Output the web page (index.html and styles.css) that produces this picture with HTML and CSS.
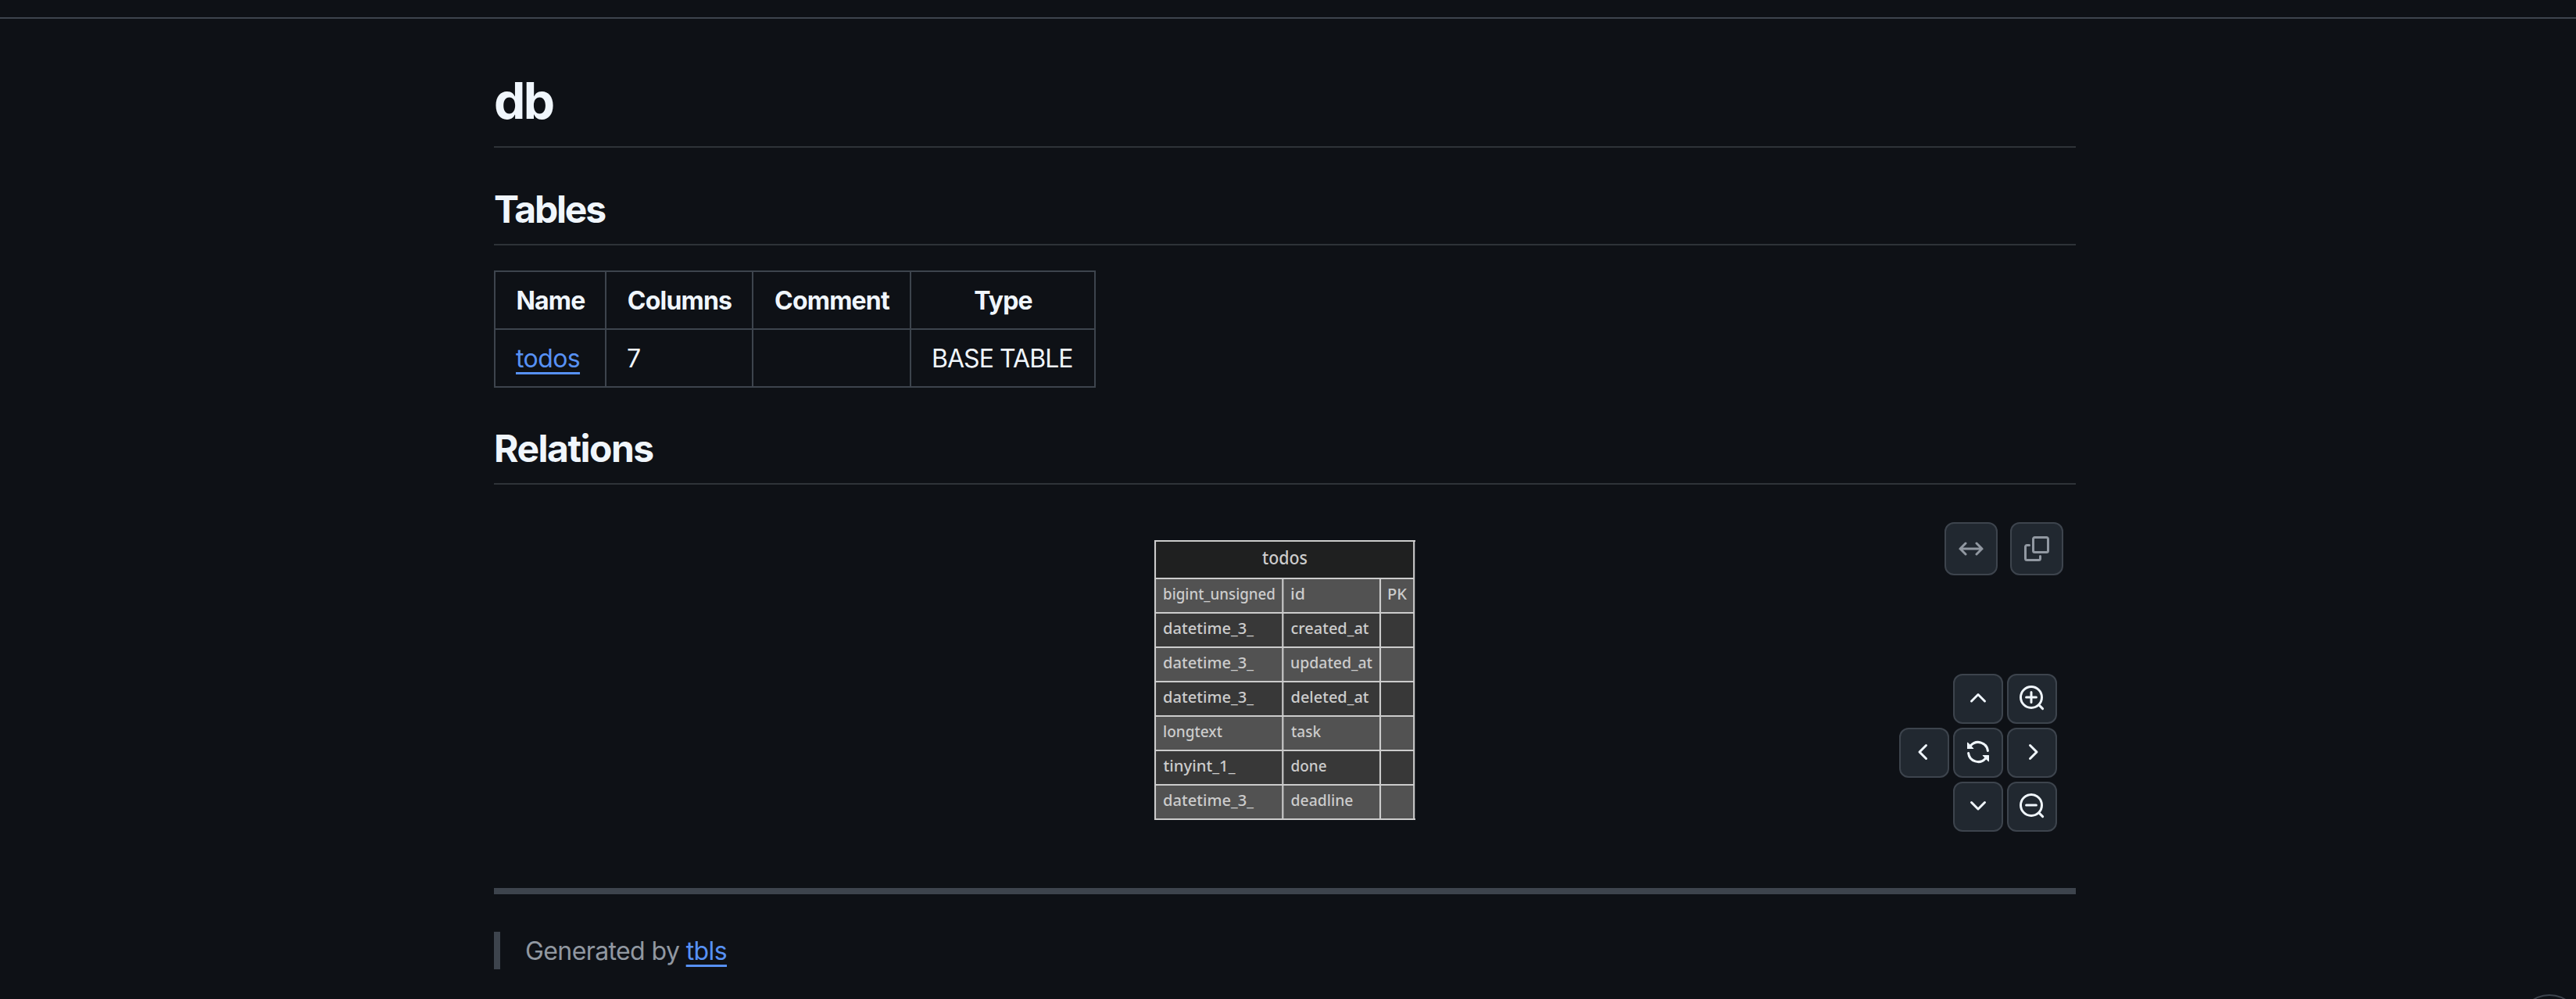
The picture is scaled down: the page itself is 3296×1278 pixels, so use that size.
FILE: index.html
```html
<!DOCTYPE html>
<html lang="en">
<head>
<meta charset="utf-8">
<title>db</title>
<link rel="stylesheet" href="styles.css">
</head>
<body>
<div class="topbar"></div>
<main class="article">
  <h1>db</h1>
  <h2 class="h-tables">Tables</h2>
  <table class="tables">
    <colgroup><col class="c1"><col class="c2"><col class="c3"><col class="c4"></colgroup>
    <tr><th>Name</th><th>Columns</th><th>Comment</th><th>Type</th></tr>
    <tr><td><a href="#">todos</a></td><td>7</td><td></td><td class="base">BASE TABLE</td></tr>
  </table>
  <h2 class="h-relations">Relations</h2>
  <section class="diagram">
    <svg class="er" width="336" height="360" viewBox="0 0 336 360">
      <rect x="2" y="2" width="332" height="356" fill="#1f2020"/>
      <g fill="#525252"><rect x="2" y="50" width="332" height="44"/><rect x="2" y="138" width="332" height="44"/><rect x="2" y="226" width="332" height="44"/><rect x="2" y="314" width="332" height="44"/></g>
      <g fill="#383838"><rect x="2" y="94" width="332" height="44"/><rect x="2" y="182" width="332" height="44"/><rect x="2" y="270" width="332" height="44"/></g>
      <path d="M1 2H335M2 50H334M2 94H334M2 138H334M2 182H334M2 226H334M2 270H334M2 314H334M1 358H335M2 1V359M165.3 50V358M290 50V358M333.2 1V359" fill="none" stroke="#ccc" stroke-width="2.1"/>
      <g class="er-text">
        <text class="er-title" x="139" y="32" textLength="58" lengthAdjust="spacingAndGlyphs">todos</text>
        <text x="12" y="77" textLength="144" lengthAdjust="spacingAndGlyphs">bigint_unsigned</text>
        <text x="12" y="121" textLength="116" lengthAdjust="spacingAndGlyphs">datetime_3_</text>
        <text x="12" y="165" textLength="116" lengthAdjust="spacingAndGlyphs">datetime_3_</text>
        <text x="12" y="209" textLength="116" lengthAdjust="spacingAndGlyphs">datetime_3_</text>
        <text x="12" y="253" textLength="76" lengthAdjust="spacingAndGlyphs">longtext</text>
        <text x="12.5" y="297" textLength="92" lengthAdjust="spacingAndGlyphs">tinyint_1_</text>
        <text x="12" y="341" textLength="116" lengthAdjust="spacingAndGlyphs">datetime_3_</text>
        <text x="175" y="77" textLength="19" lengthAdjust="spacingAndGlyphs">id</text>
        <text x="175.5" y="121" textLength="100" lengthAdjust="spacingAndGlyphs">created_at</text>
        <text x="175" y="165" textLength="105" lengthAdjust="spacingAndGlyphs">updated_at</text>
        <text x="175.5" y="209" textLength="100" lengthAdjust="spacingAndGlyphs">deleted_at</text>
        <text x="176" y="253" textLength="38" lengthAdjust="spacingAndGlyphs">task</text>
        <text x="175.5" y="297" textLength="46" lengthAdjust="spacingAndGlyphs">done</text>
        <text x="175.5" y="341" textLength="80" lengthAdjust="spacingAndGlyphs">deadline</text>
        <text x="299" y="77" textLength="25" lengthAdjust="spacingAndGlyphs">PK</text>
      </g>
    </svg>
    <div class="actions">
      <button class="btn muted" aria-label="Expand"><svg viewBox="0 0 16 16"><path d="M1 8h14M4.5 4.5 1 8l3.5 3.5M11.5 4.5 15 8l-3.5 3.5" fill="none" stroke="currentColor" stroke-width="1.5" stroke-linecap="round"/></svg></button>
      <button class="btn muted" aria-label="Copy"><svg viewBox="0 0 16 16"><path d="M0 6.75C0 5.784.784 5 1.75 5h1.5a.75.75 0 0 1 0 1.5h-1.5a.25.25 0 0 0-.25.25v7.5c0 .138.112.25.25.25h7.5a.25.25 0 0 0 .25-.25v-1.5a.75.75 0 0 1 1.5 0v1.5A1.75 1.75 0 0 1 9.25 16h-7.5A1.75 1.75 0 0 1 0 14.25Z"/><path d="M5 1.75C5 .784 5.784 0 6.75 0h7.5C15.216 0 16 .784 16 1.75v7.5A1.75 1.75 0 0 1 14.25 11h-7.5A1.75 1.75 0 0 1 5 9.25Zm1.75-.25a.25.25 0 0 0-.25.25v7.5c0 .138.112.25.25.25h7.5a.25.25 0 0 0 .25-.25v-7.5a.25.25 0 0 0-.25-.25Z"/></svg></button>
    </div>
    <div class="pad">
      <button class="btn up" aria-label="Up"><svg viewBox="0 0 16 16"><path d="M3.22 10.53a.749.749 0 0 1 0-1.06l4.25-4.25a.749.749 0 0 1 1.06 0l4.25 4.25a.749.749 0 1 1-1.06 1.06L8 6.811 4.28 10.53a.749.749 0 0 1-1.06 0Z"/></svg></button>
      <button class="btn" aria-label="Zoom in"><svg viewBox="0 0 16 16"><path d="M12.7 12.7l2.1 2.1M4.3 7.5h6.4M7.5 4.3v6.4M14.25 7.5a6.75 6.75 0 1 1-13.5 0a6.75 6.75 0 1 1 13.5 0Z" fill="none" stroke="currentColor" stroke-width="1.5" stroke-linecap="round"/></svg></button>
      <button class="btn left" aria-label="Left"><svg viewBox="0 0 16 16"><path d="M9.78 12.78a.75.75 0 0 1-1.06 0L4.47 8.53a.75.75 0 0 1 0-1.06l4.25-4.25a.751.751 0 0 1 1.042.018.751.751 0 0 1 .018 1.042L6.06 8l3.72 3.72a.75.75 0 0 1 0 1.06Z"/></svg></button>
      <button class="btn" aria-label="Reset"><svg viewBox="0 0 16 16"><path d="M1.705 8.005a.75.75 0 0 1 .834.656 5.5 5.5 0 0 0 9.592 2.97l-1.204-1.204a.25.25 0 0 1 .177-.427h3.646a.25.25 0 0 1 .25.25v3.646a.25.25 0 0 1-.427.177l-1.38-1.38A7.002 7.002 0 0 1 1.05 8.84a.75.75 0 0 1 .656-.834ZM8 2.5a5.487 5.487 0 0 0-4.131 1.869l1.204 1.204A.25.25 0 0 1 4.896 6H1.25A.25.25 0 0 1 1 5.75V2.104a.25.25 0 0 1 .427-.177l1.38 1.38A7.002 7.002 0 0 1 14.95 7.16a.75.75 0 0 1-1.49.178A5.5 5.5 0 0 0 8 2.5Z"/></svg></button>
      <button class="btn" aria-label="Right"><svg viewBox="0 0 16 16"><path d="M6.22 3.22a.75.75 0 0 1 1.06 0l4.25 4.25a.75.75 0 0 1 0 1.06l-4.25 4.25a.751.751 0 0 1-1.042-.018.751.751 0 0 1-.018-1.042L9.94 8 6.22 4.28a.75.75 0 0 1 0-1.06Z"/></svg></button>
      <button class="btn down" aria-label="Down"><svg viewBox="0 0 16 16"><path d="M12.78 5.22a.749.749 0 0 1 0 1.06l-4.25 4.25a.749.749 0 0 1-1.06 0L3.22 6.28a.749.749 0 1 1 1.06-1.06L8 8.939l3.72-3.719a.749.749 0 0 1 1.06 0Z"/></svg></button>
      <button class="btn" aria-label="Zoom out"><svg viewBox="0 0 16 16"><path d="M12.7 12.7l2.1 2.1M4.3 7.5h6.4M14.25 7.5a6.75 6.75 0 1 1-13.5 0a6.75 6.75 0 1 1 13.5 0Z" fill="none" stroke="currentColor" stroke-width="1.5" stroke-linecap="round"/></svg></button>
    </div>
  </section>
  <hr>
  <blockquote>Generated by <a href="#">tbls</a></blockquote>
</main>
<div class="fab"></div>
</body>
</html>
```
FILE: styles.css
```css
* { box-sizing: border-box; }
html, body { height: 100%; }
body {
  margin: 0;
  overflow: hidden;
  background: #0e1116;
  color: #f0f6fc;
  font: 32px/48px Inter, "Liberation Sans", sans-serif;
}
.topbar { height: 24px; border-bottom: 2px solid #3d444d; }
.article { width: 2024px; margin-left: 632px; }
h1, h2 { margin: 0; padding-top: 1px; font-weight: 650; border-bottom: 2px solid #2e3338; }
h1 { height: 101px; margin-top: 64px; font-size: 64px; line-height: 80px; letter-spacing: -2.6px; }
h2 { font-size: 48px; line-height: 60px; height: 77px; }
.h-tables { margin-top: 48px; letter-spacing: -2.2px; }
.h-relations { margin-top: 47px; letter-spacing: -1.5px; }
a { color: #5791f5; text-decoration: underline; text-decoration-thickness: 3px; text-underline-offset: 6px; text-decoration-skip-ink: none; }
.tables { table-layout: fixed; width: 770px; margin-top: 32px; border-collapse: collapse; }
.c1 { width: 142px; }
.c2 { width: 188px; }
.c3 { width: 202px; }
.c4 { width: 236px; }
th, td { height: 74px; padding: 13px 24px 11px 26px; border: 2px solid #3d444d; white-space: nowrap; text-align: left; line-height: 48px; letter-spacing: -0.6px; }
th { padding-left: 25px; font-weight: 650; text-align: center; letter-spacing: -0.8px; }
.base { letter-spacing: -0.95px; }
.diagram { position: relative; height: 468px; margin-top: 32px; padding: 38px 0 0 844px; }
.er { display: block; }
.er-text { font-family: "Noto Sans", sans-serif; font-size: 20.4px; font-weight: 500; fill: #ccc; }
.er-title { font-size: 24px; }
.actions { position: absolute; top: 16px; right: 16px; display: flex; gap: 16px; }
.btn { display: flex; align-items: center; justify-content: center; width: 64px; height: 64px; padding: 0 0 2px; border: 2px solid #3d444d; border-radius: 12px; background: #212830; color: #f0f6fc; }
.btn svg { width: 32px; height: 32px; fill: currentColor; }
.actions .btn { width: 68px; height: 68px; padding: 0; }
.muted { color: #9198a1; }
.pad { position: absolute; right: 24px; bottom: 56px; display: grid; grid-template-columns: repeat(3, 64px); gap: 5px; }
.up, .down { grid-column: 2; }
.left { grid-column: 1; }
hr { height: 8px; margin: 16px 0 0; border: 0; background: #3d444d; }
blockquote { height: 48px; margin: 48px 0 0; padding: 1px 0 0 32px; border-left: 8px solid #3d444d; color: #9198a1; letter-spacing: -0.6px; }
.fab { position: fixed; left: 3222px; top: 1272px; width: 80px; height: 80px; border: 2px solid #3d444d; border-radius: 50%; }
```
